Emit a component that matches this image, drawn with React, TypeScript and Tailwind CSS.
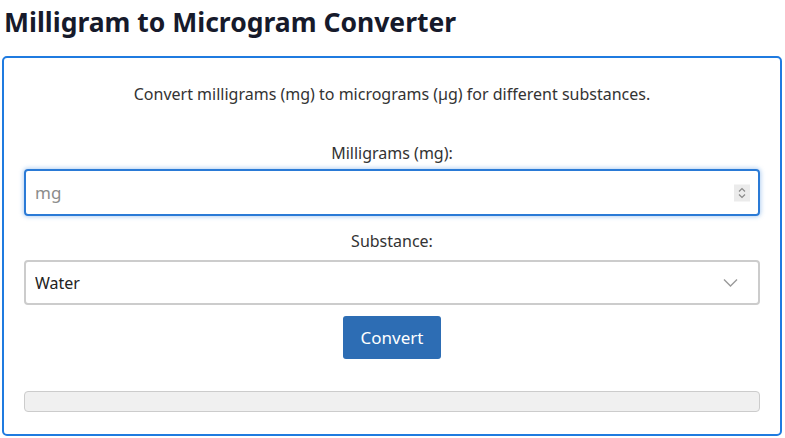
import { useState } from "react";

function Spinner() {
  return (
    <div className="absolute right-[10px] top-1/2 -translate-y-1/2 w-[16px] h-[17px] bg-[#ebebeb] flex items-center justify-center">
      <svg width="10" height="13" viewBox="0 0 10 13" fill="none" stroke="#8a8a8a" strokeWidth="1.2">
        <path d="M2 5 L5 2 L8 5" />
        <path d="M2 8 L5 11 L8 8" />
      </svg>
    </div>
  );
}

export default function App() {
  const [mg, setMg] = useState("");
  const [substance, setSubstance] = useState("water");

  return (
    <div className="w-[785px] h-[438px] bg-white overflow-hidden font-['Noto_Sans',sans-serif] text-[#333]">
      <h1 className="pl-[4px] pt-[4px] text-[26.5px] leading-[36px] font-bold text-[#161a2b]">
        Milligram to Microgram Converter
      </h1>
      <div className="mt-[16px] ml-[2px] w-[780px] border-2 border-[#1f7be0] rounded-[5px] px-[20px] pt-[24px] pb-[22px]">
        <p className="text-center text-[16px] leading-[24px]">
          Convert milligrams (mg) to micrograms (µg) for different substances.
        </p>
        <label className="block text-center text-[16px] leading-[24px] mt-[35px]">Milligrams (mg):</label>
        <div className="relative mt-[4px]">
          <input
            type="text"
            value={mg}
            onChange={(e) => setMg(e.target.value)}
            placeholder="mg"
            className="w-full h-[47px] px-[9px] border-2 border-[#2a7ad6] rounded-[4px] shadow-[0_0_4px_1px_rgba(42,122,214,0.35)] outline-none text-[17px] placeholder:text-[#8c8c8c]"
          />
          <Spinner />
        </div>
        <label className="block text-center text-[16px] leading-[24px] mt-[13px]">Substance:</label>
        <div className="relative mt-[7px]">
          <select
            value={substance}
            onChange={(e) => setSubstance(e.target.value)}
            className="appearance-none w-full h-[45px] px-[9px] border-2 border-[#cccccc] rounded-[4px] bg-white text-[16px] text-[#222] outline-none"
          >
            <option value="water">Water</option>
          </select>
          <svg className="absolute right-[22px] top-1/2 -translate-y-1/2" width="15" height="9" viewBox="0 0 15 9" fill="none" stroke="#9a9a9a" strokeWidth="1.4">
            <path d="M1 1 L7.5 7.5 L14 1" />
          </svg>
        </div>
        <div className="flex justify-center mt-[11px]">
          <button className="w-[98px] h-[43px] bg-[#2d6db4] text-white rounded-[3px] text-[17px]">Convert</button>
        </div>
        <div className="mt-[32px] h-[21px] bg-[#f0f0f0] border border-[#cccccc] rounded-[4px]"></div>
      </div>
    </div>
  );
}
